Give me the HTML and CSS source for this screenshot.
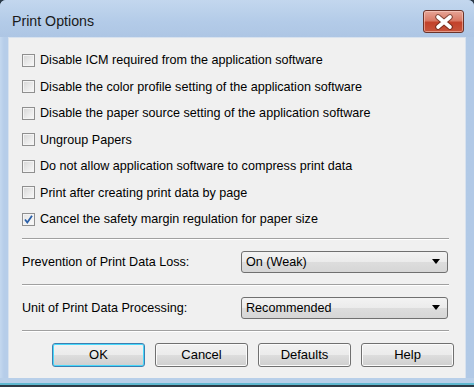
FILE: index.html
```html
<!DOCTYPE html>
<html>
<head>
<meta charset="utf-8">
<link rel="stylesheet" href="styles.css">
</head>
<body>
<div class="window">
  <div class="titlebar">
    <span class="title">Print Options</span>
    <div class="close">
      <svg width="22" height="16" viewBox="0 0 22 16">
        <path d="M5 3 L17 13 M17 3 L5 13" stroke="#4a1a10" stroke-width="5.6" stroke-linecap="round" fill="none" opacity="0.6"/>
        <path d="M5 3 L17 13 M17 3 L5 13" stroke="#ffffff" stroke-width="3.6" stroke-linecap="round" fill="none"/>
      </svg>
    </div>
  </div>
  <div class="client">
    <div class="checks">
      <div class="row"><span class="box"></span><span class="lbl">Disable ICM required from the application software</span></div>
      <div class="row"><span class="box"></span><span class="lbl">Disable the color profile setting of the application software</span></div>
      <div class="row"><span class="box"></span><span class="lbl">Disable the paper source setting of the application software</span></div>
      <div class="row"><span class="box"></span><span class="lbl">Ungroup Papers</span></div>
      <div class="row"><span class="box"></span><span class="lbl">Do not allow application software to compress print data</span></div>
      <div class="row"><span class="box"></span><span class="lbl">Print after creating print data by page</span></div>
      <div class="row"><span class="box checked"><svg width="11" height="11" viewBox="0 0 11 11"><path d="M2 5.5 L4.3 8.5 L9 1.8" stroke="#2a5fa8" stroke-width="1.8" fill="none"/></svg></span><span class="lbl">Cancel the safety margin regulation for paper size</span></div>
    </div>
    <div class="sep sep1"></div>
    <div class="field">
      <span class="flabel">Prevention of Print Data Loss:</span>
      <div class="select"><span>On (Weak)</span><span class="arrow"></span></div>
    </div>
    <div class="sep sep2"></div>
    <div class="field">
      <span class="flabel">Unit of Print Data Processing:</span>
      <div class="select"><span>Recommended</span><span class="arrow"></span></div>
    </div>
    <div class="sep sep3"></div>
    <div class="buttons">
      <div class="btn default">OK</div>
      <div class="btn">Cancel</div>
      <div class="btn">Defaults</div>
      <div class="btn">Help</div>
    </div>
  </div>
  <div class="bottomline"></div>
</div>
</body>
</html>
```
FILE: styles.css
```css
html, body {
  margin: 0;
  padding: 0;
  background: #2b3a48;
}
.window {
  width: 474px;
  height: 387px;
  box-sizing: border-box;
  display: flex;
  flex-direction: column;
  background: linear-gradient(to right, #c4d8ef 0px, #b6cde9 4px, #b1c9e6 100%);
  border-top-left-radius: 6px;
  border-top-right-radius: 6px;
  overflow: hidden;
  font-family: "Liberation Sans", Arial, sans-serif;
  font-size: 12.6px;
  color: #000;
}
.titlebar {
  height: 37px;
  flex: none;
  display: flex;
  align-items: flex-start;
  justify-content: space-between;
  background: linear-gradient(to bottom, #c3d7ee 0%, #b3cbe8 60%, #aec6e4 100%);
  box-sizing: border-box;
  padding: 0 10px 0 12px;
}
.title {
  font-family: "Liberation Sans", Arial, sans-serif;
  font-size: 14.2px;
  color: #1a1a1a;
  margin-top: 13px;
}
.close {
  margin-top: 10px;
  width: 41px;
  height: 23px;
  box-sizing: border-box;
  border: 1px solid #6b3329;
  border-radius: 3px;
  background: linear-gradient(to bottom, #e7a597 0%, #d97a66 45%, #c2412a 55%, #c8553c 100%);
  box-shadow: inset 0 0 0 1px rgba(255, 220, 210, 0.5);
  display: flex;
  align-items: center;
  justify-content: center;
}
.client {
  flex: 1;
  margin: 0 8px 0 8px;
  background: #f0f0f0;
  border: 1px solid #d8e2ee;
  border-bottom: none;
  box-sizing: border-box;
  padding: 9px 16px 0 13px;
  display: flex;
  flex-direction: column;
}
.checks {
  display: flex;
  flex-direction: column;
}
.row {
  height: 26.5px;
  display: flex;
  align-items: center;
}
.box {
  width: 13px;
  height: 13px;
  box-sizing: border-box;
  border: 1px solid #8f8f8f;
  background: linear-gradient(135deg, #d6d6d6 0%, #ececec 60%, #f8f8f8 100%);
  box-shadow: inset 0 0 0 1px #f4f4f4;
  margin-right: 5px;
  flex: none;
  display: flex;
  align-items: center;
  justify-content: center;
}
.box.checked {
  background: linear-gradient(135deg, #e4e4e4 0%, #f2f2f2 60%, #fafafa 100%);
}
.box svg { display: block; }
.lbl {
  white-space: nowrap;
}
.sep {
  height: 1px;
  background: #a0a0a0;
  border-bottom: 1px solid #ffffff;
}
.sep1 { margin-top: 5px; }
.field {
  height: 44px;
  display: flex;
  align-items: center;
  justify-content: space-between;
}
.flabel {
  white-space: nowrap;
}
.select {
  width: 207px;
  height: 22px;
  box-sizing: border-box;
  border: 1px solid #707070;
  border-radius: 3px;
  background: linear-gradient(to bottom, #f3f3f3 0%, #ebebeb 50%, #dddddd 51%, #d6d6d6 100%);
  display: flex;
  align-items: center;
  justify-content: space-between;
  padding: 0 5px 0 4px;
  margin-right: 1px;
}
.arrow {
  width: 0;
  height: 0;
  border-left: 4px solid transparent;
  border-right: 4px solid transparent;
  border-top: 5px solid #000;
  margin-right: 2px;
}
.buttons {
  display: flex;
  gap: 10px;
  padding-left: 30px;
  margin-top: 11px;
}
.btn {
  flex: none;
  width: 93px;
  height: 24px;
  box-sizing: border-box;
  border: 1px solid #707070;
  border-radius: 3px;
  background: linear-gradient(to bottom, #f2f2f2 0%, #ebebeb 50%, #dddddd 51%, #cfcfcf 100%);
  display: flex;
  align-items: center;
  justify-content: center;
  box-shadow: inset 0 0 0 1px #fbfbfb;
  font-size: 13px;
}
.btn.default {
  border-color: #3c7fb1;
  box-shadow: inset 0 0 0 1px #48d8fb;
}
.bottomline {
  height: 9px;
  flex: none;
  background: linear-gradient(to bottom, #b8cfe9 0px, #b8cfe9 5px, #5fb8d0 5px, #5fb8d0 7px, #2d3b47 7px);
}
```
